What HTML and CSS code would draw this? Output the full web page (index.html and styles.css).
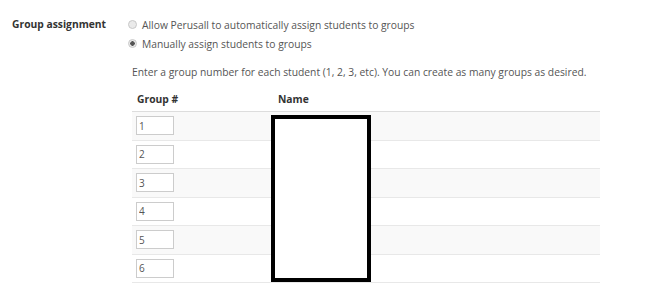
FILE: index.html
```html
<!DOCTYPE html>
<html lang="en">
<head>
  <meta charset="UTF-8">
  <title>Group assignment</title>
  <link rel="stylesheet" href="styles.css">
</head>
<body>
  <div class="form-row">
    <div class="form-label">Group assignment</div>
    <div class="form-field">
      <label class="radio"><input type="radio" name="mode"> Allow Perusall to automatically assign students to groups</label>
      <label class="radio"><input type="radio" name="mode" checked> Manually assign students to groups</label>

      <p class="hint">Enter a group number for each student (1, 2, 3, etc). You can create as many groups as desired.</p>

      <div class="table-wrap">
        <table class="groups">
          <thead>
            <tr><th class="col-group">Group #</th><th>Name</th></tr>
          </thead>
          <tbody>
            <tr><td><input type="text" value="1"></td><td></td></tr>
            <tr><td><input type="text" value="2"></td><td></td></tr>
            <tr><td><input type="text" value="3"></td><td></td></tr>
            <tr><td><input type="text" value="4"></td><td></td></tr>
            <tr><td><input type="text" value="5"></td><td></td></tr>
            <tr><td><input type="text" value="6"></td><td></td></tr>
          </tbody>
        </table>
        <!-- redacted names -->
        <div class="redact"></div>
      </div>
    </div>
  </div>
</body>
</html>
```

FILE: styles.css
```css
body {
  margin: 0;
  padding: 15px 12px 0;
  font-family: 'Open Sans', sans-serif;
  font-size: 10.3px;
  color: #555;
  background: #fff;
}
.form-row {
  display: flex;
}
.form-label {
  width: 116px;
  flex: none;
  font-weight: bold;
  color: #333;
  line-height: 19px;
}
.form-field {
  flex: 1;
}
.radio {
  display: flex;
  align-items: center;
  gap: 5px;
  height: 19px;
}
.radio input {
  appearance: none;
  margin: 0;
  width: 9px;
  height: 9px;
  border: 1px solid #c8c8c8;
  border-radius: 50%;
  background: #eaeaea;
}
.radio input:checked {
  background: radial-gradient(circle, #555 0 2px, #eaeaea 2.5px);
}
.hint {
  margin: 10px 0 0 4px;
  line-height: 19px;
}
.table-wrap {
  position: relative;
  width: 468px;
  margin: 5px 0 0 4px;
}
.groups {
  width: 100%;
  border-collapse: collapse;
}
.groups th {
  text-align: left;
  color: #333;
  font-weight: bold;
  padding: 0 0 0 5px;
  height: 24px;
  border-bottom: 1px solid #ddd;
}
.groups .col-group {
  width: 136px;
}
.groups td {
  height: 27.5px;
  padding: 0 0 0 4px;
  border-bottom: 1px solid #e8e8e8;
}
.groups tbody tr:nth-child(odd) {
  background: #f9f9f9;
}
.groups input {
  width: 38px;
  height: 19px;
  box-sizing: border-box;
  border: 1px solid #ccc;
  padding: 0 2px;
  font-family: 'Open Sans', sans-serif;
  font-size: 10px;
  color: #555;
  background: #fff;
  display: block;
}
.redact {
  position: absolute;
  left: 139px;
  top: 28px;
  width: 92px;
  height: 159px;
  border: 4px solid #000;
  background: #fff;
}
```
